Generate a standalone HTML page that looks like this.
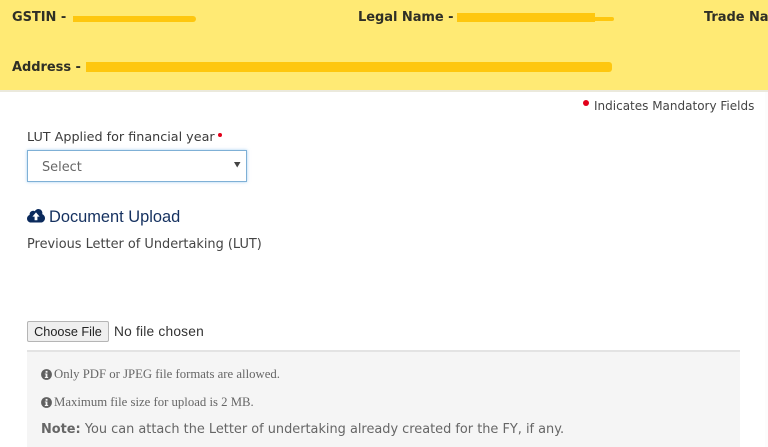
<!DOCTYPE html>
<html><head><meta charset="utf-8">
<style>
html,body{margin:0;padding:0;width:768px;height:447px;overflow:hidden;background:#fff}
.a{position:absolute;white-space:nowrap;line-height:16px}
.v{font-family:"DejaVu Sans",sans-serif;font-size:12px;color:#333}
.b{font-family:"DejaVu Sans",sans-serif;font-weight:bold;font-size:13px;color:#2f2f26;letter-spacing:-.05px}
.s{font-family:"Liberation Serif",serif;font-size:12.75px;color:#666}
.r{position:absolute;background:#fec70f}
</style></head><body>
<div style="position:absolute;left:0;top:0;width:768px;height:90px;background:#ffea74"></div>
<div style="position:absolute;left:0;top:90px;width:768px;height:2px;background:#ebe9dc"></div>
<div style="position:absolute;left:765px;top:92px;width:3px;height:355px;background:#fcfcfc"></div>

<div class="a b" style="left:12px;top:9px;top:10px">GSTIN -</div>
<div class="r" style="left:73px;top:16px;width:123px;height:6px;border-radius:0 3px 3px 0"></div>
<div class="a b" style="left:358px;top:10px">Legal Name -</div>
<div class="r" style="left:457px;top:13px;width:138px;height:9px"></div>
<div class="r" style="left:590px;top:17px;width:24px;height:4px;border-radius:0 3px 3px 0"></div>
<div class="a b" style="left:704px;top:10px">Trade Na</div>
<div class="a b" style="left:12px;top:60px">Address -</div>
<div class="r" style="left:86px;top:62px;width:526px;height:10px;border-radius:0 3px 3px 0"></div>

<div class="a" style="left:583px;top:100px;width:6px;height:6px;border-radius:50%;background:#e2001a"></div>
<div class="a v" style="left:594px;top:98px;font-size:12px;color:#444">Indicates Mandatory Fields</div>

<div class="a v" style="left:27px;top:130px;font-size:12.75px;color:#3a3a3a">LUT Applied for financial year</div>
<div class="a" style="left:218px;top:133px;width:4px;height:4px;border-radius:50%;background:#e2001a"></div>

<div style="position:absolute;left:27px;top:150px;width:218px;height:30px;border:1px solid #7fb0d6;box-shadow:0 0 3px rgba(102,175,233,.6);background:#fff"></div>
<div class="a v" style="left:42px;top:160px;font-size:12.9px;color:#666">Select</div>
<svg style="position:absolute;left:234px;top:162px" width="7" height="6"><path d="M0 0H6.5L3.2 5.5Z" fill="#444"/></svg>

<svg style="position:absolute;left:27px;top:209px" width="18" height="14" viewBox="0 0 18 14"><path d="M4 13.5C1.8 13.5 0 11.8 0 9.6 0 7.9 1 6.5 2.6 5.9 2.6 5.7 2.6 5.5 2.6 5.4 2.6 3.3 4.3 1.8 6.2 1.8 6.8 1.8 7.3 1.9 7.8 2.2 8.6.9 9.9 0 11.4 0c2.2 0 4 1.8 4 4 0 .4-.1.7-.2 1.1 1.6.6 2.8 2.3 2.8 4.1 0 2.4-1.9 4.3-4.3 4.3Z" fill="#0b2a5c"/><path d="M9 3.4 12.6 7.6H10.4V11.2H7.6V7.6H5.4Z" fill="#fff"/></svg>
<div class="a" style="left:49px;top:208px;font-family:'Liberation Sans',sans-serif;font-size:16.4px;line-height:18px;color:#14305f">Document Upload</div>

<div class="a v" style="left:27px;top:237px;font-size:12.9px;color:#444">Previous Letter of Undertaking (LUT)</div>

<div style="position:absolute;left:27px;top:321px;width:80px;height:19px;background:#efefef;border:1px solid #b5b5b5;border-radius:2px;font:12.7px/20px 'Liberation Sans',sans-serif;color:#222;text-align:center">Choose File</div>
<div class="a" style="left:114px;top:324px;font:13.75px/16px 'Liberation Sans',sans-serif;color:#333;letter-spacing:.2px">No file chosen</div>

<div style="position:absolute;left:27px;top:350px;width:713px;height:97px;background:#f5f5f5;border-top:2px solid #e3e3e3;box-sizing:border-box"></div>

<svg style="position:absolute;left:41px;top:369px" width="11" height="11" viewBox="0 0 11 11"><circle cx="5.5" cy="5.5" r="5.4" fill="#5f5f5f"/><rect x="4.6" y="1.9" width="1.9" height="1.8" fill="#f5f5f5"/><path d="M3.8 4.5H6.4V8H7.2V9H3.8V8H4.6V5.4H3.8Z" fill="#f5f5f5"/></svg>
<div class="a s" style="left:54px;top:366px">Only PDF or JPEG file formats are allowed.</div>
<svg style="position:absolute;left:41px;top:397px" width="11" height="11" viewBox="0 0 11 11"><circle cx="5.5" cy="5.5" r="5.4" fill="#5f5f5f"/><rect x="4.6" y="1.9" width="1.9" height="1.8" fill="#f5f5f5"/><path d="M3.8 4.5H6.4V8H7.2V9H3.8V8H4.6V5.4H3.8Z" fill="#f5f5f5"/></svg>
<div class="a s" style="left:54px;top:394px">Maximum file size for upload is 2 MB.</div>
<div class="a v" style="left:41px;top:422px;font-size:12.9px;color:#666"><b>Note:</b> You can attach the Letter of undertaking already created for the FY, if any.</div>
</body></html>
